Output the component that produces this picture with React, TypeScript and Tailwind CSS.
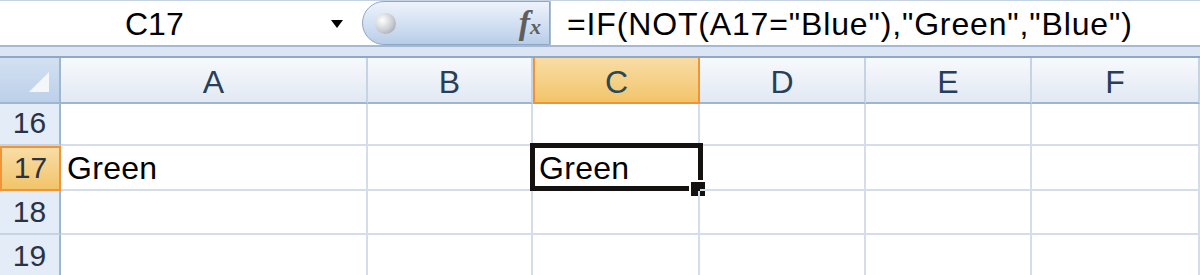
import { ReactNode } from 'react'

const cols = ['A', 'B', 'C', 'D', 'E', 'F']
const rows = [
  { n: 16, a: '', c: '' },
  { n: 17, a: 'Green', c: 'Green' },
  { n: 18, a: '', c: '' },
  { n: 19, a: '', c: '' },
]

function Cell({ children, selected }: { children?: ReactNode; selected?: boolean }) {
  return (
    <div className="relative flex items-end border-r-2 border-b-2 border-[#d5dcea] pl-[6px] pb-[5px] text-[32px] leading-none tracking-[0.3px] text-black">
      {children}
      {selected && (
        <>
          <div className="pointer-events-none absolute -left-[3px] -top-[3px] -right-[5px] -bottom-[2px] border-[5px] border-[#141210]" />
          <div className="absolute -right-[9px] -bottom-[9px] h-[18px] w-[18px] border-2 border-white bg-[#141210]" />
        </>
      )}
    </div>
  )
}

export default function App() {
  return (
    <div className="h-[275px] w-[1200px] overflow-hidden bg-white font-['Liberation_Sans',Arial,sans-serif]">
      {/* formula bar */}
      <div className="flex h-[45px] border-t border-[#c4d2e3]">
        <div className="flex w-[362px] items-center bg-white">
          <span className="pl-[125px] pt-[2px] text-[32px] leading-none text-black">C17</span>
          <span className="ml-auto mr-[19px] mt-[2px] h-0 w-0 border-x-[6px] border-t-[8px] border-x-transparent border-t-black" />
        </div>
        <div className="flex w-[188px] items-center justify-between rounded-l-[22px] border border-[#8ea7c6] bg-gradient-to-b from-[#eef3fb] via-[#d4e1f2] to-[#b9cde8] pl-[12px] pr-[8px]">
          <span className="h-[21px] w-[21px] rounded-full bg-[radial-gradient(circle_at_35%_35%,#ffffff,#c9ccd2_55%,#8f949c)]" />
          <span className="font-['Liberation_Serif',serif] text-[34px] font-bold italic leading-none text-[#5e5e5e]">
            f<span className="text-[22px]">x</span>
          </span>
        </div>
        <div className="flex flex-1 items-center border-l border-[#a9bcd4] bg-white pl-[16px] pt-[2px] text-[32px] leading-none tracking-[0.85px] text-black">
          =IF(NOT(A17="Blue"),"Green","Blue")
        </div>
      </div>
      <div className="h-[13px] border-t-2 border-b-2 border-t-[#a6b9d2] border-b-[#8fa8c6] bg-[#dbe5f3]" />

      {/* sheet */}
      <div className="grid grid-cols-[61px_307px_165px_167px_166px_166px_1fr] grid-rows-[46px_42px_45px_44px_44px]">
        <div className="relative border-r-2 border-b-2 border-[#9eb6ce] bg-gradient-to-b from-[#d3e0f1] to-[#bcd0ea]">
          <span className="absolute bottom-[10px] right-[10px] h-0 w-0 border-b-[20px] border-l-[20px] border-b-[#f4f6f9] border-l-transparent" />
        </div>
        {cols.map((c) =>
          c === 'C' ? (
            <div
              key={c}
              className="flex items-center justify-center border-x-2 border-b-2 border-[#f29436] bg-gradient-to-b from-[#f9dda6] to-[#f1c468] pt-[3px] text-[32px] leading-none text-[#27495a]"
            >
              {c}
            </div>
          ) : (
            <div
              key={c}
              className="flex items-center justify-center border-r-2 border-b-2 border-r-[#c6d3e3] border-b-[#9eb6ce] bg-gradient-to-b from-[#f7f9fc] to-[#e2e9f3] pt-[3px] text-[32px] leading-none text-[#27405a]"
            >
              {c}
            </div>
          ),
        )}
        {rows.map((r) => (
          <div key={r.n} className="contents">
            {r.n === 17 ? (
              <div className="flex items-end justify-center border-2 border-[#f29436] bg-gradient-to-b from-[#f9dda6] to-[#f1c468] pb-[6px] text-[30px] leading-none text-[#2a3346]">
                {r.n}
              </div>
            ) : (
              <div className="flex items-end justify-center border-r-2 border-b-2 border-r-[#9eb6ce] border-b-[#c5d3e3] bg-[#e4ecf7] pb-[6px] text-[30px] leading-none text-[#2a3346]">
                {r.n}
              </div>
            )}
            <Cell>{r.a}</Cell>
            <Cell />
            <Cell selected={r.n === 17}>{r.c}</Cell>
            <Cell />
            <Cell />
            <Cell />
          </div>
        ))}
      </div>
    </div>
  )
}
